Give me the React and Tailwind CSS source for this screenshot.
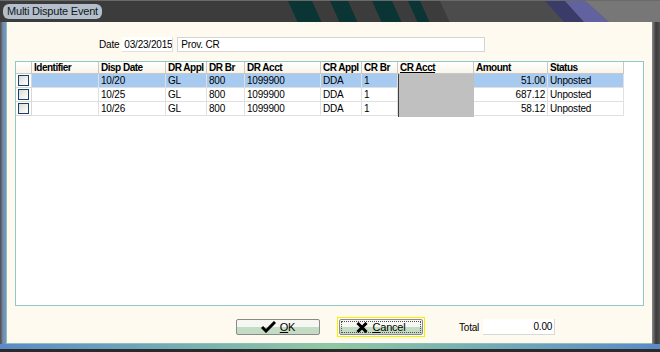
import React from 'react';

const cols = [
  { key: 'chk', label: '', w: 'w-[16px]' },
  { key: 'id', label: 'Identifier', w: 'w-[67px]' },
  { key: 'date', label: 'Disp Date', w: 'w-[67px]' },
  { key: 'drAppl', label: 'DR Appl', w: 'w-[41px]' },
  { key: 'drBr', label: 'DR Br', w: 'w-[38px]' },
  { key: 'drAcct', label: 'DR Acct', w: 'w-[76px]' },
  { key: 'crAppl', label: 'CR Appl', w: 'w-[41px]' },
  { key: 'crBr', label: 'CR Br', w: 'w-[36px]' },
  { key: 'crAcct', label: 'CR Acct', w: 'w-[76px]' },
  { key: 'amount', label: 'Amount', w: 'w-[74px]' },
  { key: 'status', label: 'Status', w: 'w-[76px]' },
];

const rows = [
  { date: '10/20', drAppl: 'GL', drBr: '800', drAcct: '1099900', crAppl: 'DDA', crBr: '1', amount: '51.00', status: 'Unposted' },
  { date: '10/25', drAppl: 'GL', drBr: '800', drAcct: '1099900', crAppl: 'DDA', crBr: '1', amount: '687.12', status: 'Unposted' },
  { date: '10/26', drAppl: 'GL', drBr: '800', drAcct: '1099900', crAppl: 'DDA', crBr: '1', amount: '58.12', status: 'Unposted' },
];

function CheckBox() {
  return (
    <div className="w-[11px] h-[11px] border border-[#1c3f6e] bg-gradient-to-br from-[#dcdcd4] to-white" />
  );
}

function TitleBar() {
  return (
    <div className="relative h-[22px] bg-[#3c3c3c] border-t border-[#6a6a6a] overflow-hidden">
      <svg className="absolute inset-0" width="660" height="22">
        <polygon points="288,0 312,0 322,22 298,22" fill="#0b3434" />
        <polygon points="330,0 348,0 358,22 340,22" fill="#0b3434" />
        <polygon points="372,0 392,0 402,22 382,22" fill="#0b3434" />
        <polygon points="408,0 420,0 430,22 418,22" fill="#0b3434" />
        <polygon points="440,0 660,0 660,22 450,22" fill="#4c4c4c" />
        <polygon points="545,0 565,0 585,22 565,22" fill="#3b3b6a" />
        <polygon points="565,0 585,0 610,22 585,22" fill="#6262a0" />
        <polygon points="585,0 660,0 660,22 610,22" fill="#777777" />
      </svg>
      <div className="absolute left-[3px] top-[3px] h-[15px] px-[4px] rounded-[6px] bg-[#b4bfcb] flex items-center text-[11px] text-[#101820]">
        Multi Dispute Event
      </div>
    </div>
  );
}

function Button({ icon, mnemonic, rest, focused }) {
  return (
    <div className={focused ? 'border border-[#f4f000] p-[1px]' : 'p-[1px]'}>
      <div className="w-[84px] h-[16px] rounded-[2px] border border-[#8a8a8a] bg-gradient-to-b from-[#f6f6f2] from-50% to-[#c4dcc4] to-50% p-[1px]">
        <div className={`w-full h-full flex items-center justify-center gap-[4px] ${focused ? 'border border-dotted border-[#505050]' : ''}`}>
          {icon}
          <span className="text-[11px] text-black leading-none"><u>{mnemonic}</u>{rest}</span>
        </div>
      </div>
    </div>
  );
}

export default function App() {
  return (
    <div className="w-[660px] h-[352px] flex flex-col bg-[#3a3a3a] font-['Liberation_Sans',Arial,sans-serif] text-[10px] tracking-[-0.2px] text-black">
      <TitleBar />
      <div className="flex flex-1">
        <div className="w-[6px] bg-gradient-to-r from-[#4a4a4a] via-[#7a8aa8] to-[#6a9ac8]" />
        <div className="flex-1 bg-[#fffaf0] border-l border-[#8ec0b8] border-b flex flex-col">
          {/* Date row */}
          <div className="flex items-center mt-[15px] h-[15px] pl-[92px]">
            <span className="mr-[3px]">Date</span>
            <div className="w-[51px] h-[15px] bg-white border-r border-b border-[#e0e0e0] flex items-center pl-[2px] whitespace-nowrap overflow-hidden">03/23/2015</div>
            <div className="w-[308px] h-[15px] ml-[4px] bg-white border border-[#d4d4d4] flex items-center pl-[3px]">Prov. CR</div>
          </div>

          {/* Grid */}
          <div className="ml-[8px] mt-[9px] w-[629px] h-[245px] bg-white border border-[#90c8c8]">
            <div className="flex h-[12px]">
              {cols.map((c) => (
                <div key={c.key} className={`${c.w} shrink-0 h-full bg-gradient-to-b from-white to-[#f8f4e8] border-r border-b border-[#c8c8c8] font-bold leading-[12px] pl-[2px] tracking-[-0.5px] whitespace-nowrap overflow-hidden ${c.key === 'crAcct' ? 'underline' : ''}`}>
                  {c.label}
                </div>
              ))}
            </div>
            {rows.map((r, i) => (
              <div key={i} className="flex h-[14px]">
                {cols.map((c) => {
                  if (c.key === 'chk') {
                    return (
                      <div key={c.key} className={`${c.w} shrink-0 h-full border-r border-b border-[#d8d8d8] bg-white flex items-center justify-center`}>
                        <CheckBox />
                      </div>
                    );
                  }
                  if (c.key === 'crAcct') {
                    return <div key={c.key} className={`${c.w} shrink-0 h-[15px] bg-[#c0c0c0] border-l border-[#404040]`} />;
                  }
                  return (
                    <div key={c.key} className={`${c.w} shrink-0 h-full border-r border-b border-[#e0e0e0] leading-[13px] px-[2px] whitespace-nowrap overflow-hidden ${i === 0 ? 'bg-[#a6caf0]' : ''} ${c.key === 'amount' ? 'text-right' : ''}`}>
                      {r[c.key] || ''}
                    </div>
                  );
                })}
              </div>
            ))}
          </div>

          {/* Buttons */}
          <div className="flex items-center mt-[11px] pl-[228px]">
            <Button
              icon={
                <svg width="15" height="12" viewBox="0 0 15 12">
                  <path d="M1 6 L5 10 L14 1" stroke="black" strokeWidth="3" fill="none" />
                </svg>
              }
              mnemonic="O"
              rest="K"
            />
            <div className="ml-[16px]">
              <Button
                focused
                icon={
                  <svg width="12" height="11" viewBox="0 0 12 11">
                    <path d="M1.5 1 L10.5 10 M10.5 1 L1.5 10" stroke="black" strokeWidth="3" fill="none" />
                  </svg>
                }
                mnemonic="C"
                rest="ancel"
              />
            </div>
            <span className="ml-[34px]">Total</span>
            <div className="ml-[4px] w-[72px] h-[16px] bg-white border-r border-b border-[#d8d8d8] flex items-center justify-end pr-[2px]">0.00</div>
          </div>
        </div>
        <div className="w-[8px] bg-gradient-to-r from-[#8a8a8a] via-[#3a3a3a] to-[#505050]" />
      </div>
      <div className="h-[8px] bg-gradient-to-r from-[#5a8ac8] via-[#90c8a0] to-[#5a8ac8] border-b-[3px] border-[#2a2a2a]" />
    </div>
  );
}
